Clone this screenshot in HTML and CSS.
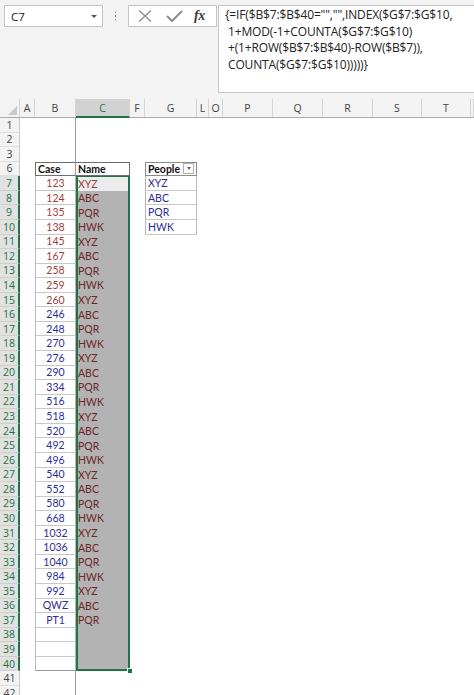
FILE: index.html
```html
<!DOCTYPE html>
<html>
<head>
<meta charset="utf-8">
<link rel="stylesheet" href="styles.css">
</head>
<body>
<div class="app">
  <div class="topbar">
    <div class="namebox"><span>C7</span><span class="nb-arrow"></span></div>
    <div class="grip"><i></i><i></i><i></i></div>
    <div class="fxbtns">
      <svg class="ico-x" width="14" height="12" viewBox="0 0 14 12"><path d="M1 0.5 L13 11.5 M13 0.5 L1 11.5" stroke="#8c8c8c" stroke-width="1.3" fill="none"/></svg>
      <svg class="ico-ok" width="17" height="12" viewBox="0 0 17 12"><path d="M1 6 L6 11 L16 1" stroke="#8c8c8c" stroke-width="2" fill="none"/></svg>
      <span class="fx">fx</span>
    </div>
    <div class="formula">
      <div class="fl">{=IF($B$7:$B$40="","",INDEX($G$7:$G$10,</div>
      <div class="fl"> 1+MOD(-1+COUNTA($G$7:$G$10)</div>
      <div class="fl"> +(1+ROW($B$7:$B$40)-ROW($B$7)),</div>
      <div class="fl"> COUNTA($G$7:$G$10)))))}</div>
    </div>
  </div>

  <div class="sheet">
    <div class="hdr">
      <div class="corner"><span class="tri"></span></div>
      <div class="w-a">A</div>
      <div class="w-b">B</div>
      <div class="w-c csel">C</div>
      <div class="w-f">F</div>
      <div class="w-g">G</div>
      <div class="w-l">L</div>
      <div class="w-o">O</div>
      <div class="w-p">P</div>
      <div class="w-p">Q</div>
      <div class="w-p">R</div>
      <div class="w-s">S</div>
      <div class="w-s">T</div>
      <div class="w-rest"></div>
    </div>

    <div class="row"><div class="rh">1</div><div class="cell w-a"></div><div class="cell w-b"></div><div class="cell w-c"></div><div class="cell w-f"></div><div class="cell w-g"></div><div class="cell w-rest"></div></div>
    <div class="row"><div class="rh">2</div><div class="cell w-a"></div><div class="cell w-b"></div><div class="cell w-c"></div><div class="cell w-f"></div><div class="cell w-g"></div><div class="cell w-rest"></div></div>
    <div class="row"><div class="rh">3</div><div class="cell w-a"></div><div class="cell w-b"></div><div class="cell w-c"></div><div class="cell w-f"></div><div class="cell w-g"></div><div class="cell w-rest"></div></div>
    <div class="row"><div class="rh">6</div><div class="cell w-a"></div><div class="cell w-b th thb">Case</div><div class="cell w-c th thc">Name</div><div class="cell w-f"></div><div class="cell w-g gth"><span>People</span><span class="dd"><span class="dd-tri"></span></span></div><div class="cell w-rest"></div></div>

    <div class="row"><div class="rh sel">7</div><div class="cell w-a"></div><div class="cell w-b tb red">123</div><div class="cell w-c sel first">XYZ</div><div class="cell w-f"></div><div class="cell w-g tg">XYZ</div><div class="cell w-rest"></div></div>
    <div class="row"><div class="rh sel">8</div><div class="cell w-a"></div><div class="cell w-b tb red">124</div><div class="cell w-c sel">ABC</div><div class="cell w-f"></div><div class="cell w-g tg">ABC</div><div class="cell w-rest"></div></div>
    <div class="row"><div class="rh sel">9</div><div class="cell w-a"></div><div class="cell w-b tb red">135</div><div class="cell w-c sel">PQR</div><div class="cell w-f"></div><div class="cell w-g tg">PQR</div><div class="cell w-rest"></div></div>
    <div class="row"><div class="rh sel">10</div><div class="cell w-a"></div><div class="cell w-b tb red">138</div><div class="cell w-c sel">HWK</div><div class="cell w-f"></div><div class="cell w-g tg">HWK</div><div class="cell w-rest"></div></div>
    <div class="row"><div class="rh sel">11</div><div class="cell w-a"></div><div class="cell w-b tb red">145</div><div class="cell w-c sel">XYZ</div><div class="cell w-f"></div><div class="cell w-g"></div><div class="cell w-rest"></div></div>
    <div class="row"><div class="rh sel">12</div><div class="cell w-a"></div><div class="cell w-b tb red">167</div><div class="cell w-c sel">ABC</div><div class="cell w-f"></div><div class="cell w-g"></div><div class="cell w-rest"></div></div>
    <div class="row"><div class="rh sel">13</div><div class="cell w-a"></div><div class="cell w-b tb red">258</div><div class="cell w-c sel">PQR</div><div class="cell w-f"></div><div class="cell w-g"></div><div class="cell w-rest"></div></div>
    <div class="row"><div class="rh sel">14</div><div class="cell w-a"></div><div class="cell w-b tb red">259</div><div class="cell w-c sel">HWK</div><div class="cell w-f"></div><div class="cell w-g"></div><div class="cell w-rest"></div></div>
    <div class="row"><div class="rh sel">15</div><div class="cell w-a"></div><div class="cell w-b tb red">260</div><div class="cell w-c sel">XYZ</div><div class="cell w-f"></div><div class="cell w-g"></div><div class="cell w-rest"></div></div>
    <div class="row"><div class="rh sel">16</div><div class="cell w-a"></div><div class="cell w-b tb blue">246</div><div class="cell w-c sel">ABC</div><div class="cell w-f"></div><div class="cell w-g"></div><div class="cell w-rest"></div></div>
    <div class="row"><div class="rh sel">17</div><div class="cell w-a"></div><div class="cell w-b tb blue">248</div><div class="cell w-c sel">PQR</div><div class="cell w-f"></div><div class="cell w-g"></div><div class="cell w-rest"></div></div>
    <div class="row"><div class="rh sel">18</div><div class="cell w-a"></div><div class="cell w-b tb blue">270</div><div class="cell w-c sel">HWK</div><div class="cell w-f"></div><div class="cell w-g"></div><div class="cell w-rest"></div></div>
    <div class="row"><div class="rh sel">19</div><div class="cell w-a"></div><div class="cell w-b tb blue">276</div><div class="cell w-c sel">XYZ</div><div class="cell w-f"></div><div class="cell w-g"></div><div class="cell w-rest"></div></div>
    <div class="row"><div class="rh sel">20</div><div class="cell w-a"></div><div class="cell w-b tb blue">290</div><div class="cell w-c sel">ABC</div><div class="cell w-f"></div><div class="cell w-g"></div><div class="cell w-rest"></div></div>
    <div class="row"><div class="rh sel">21</div><div class="cell w-a"></div><div class="cell w-b tb blue">334</div><div class="cell w-c sel">PQR</div><div class="cell w-f"></div><div class="cell w-g"></div><div class="cell w-rest"></div></div>
    <div class="row"><div class="rh sel">22</div><div class="cell w-a"></div><div class="cell w-b tb blue">516</div><div class="cell w-c sel">HWK</div><div class="cell w-f"></div><div class="cell w-g"></div><div class="cell w-rest"></div></div>
    <div class="row"><div class="rh sel">23</div><div class="cell w-a"></div><div class="cell w-b tb blue">518</div><div class="cell w-c sel">XYZ</div><div class="cell w-f"></div><div class="cell w-g"></div><div class="cell w-rest"></div></div>
    <div class="row"><div class="rh sel">24</div><div class="cell w-a"></div><div class="cell w-b tb blue">520</div><div class="cell w-c sel">ABC</div><div class="cell w-f"></div><div class="cell w-g"></div><div class="cell w-rest"></div></div>
    <div class="row"><div class="rh sel">25</div><div class="cell w-a"></div><div class="cell w-b tb blue">492</div><div class="cell w-c sel">PQR</div><div class="cell w-f"></div><div class="cell w-g"></div><div class="cell w-rest"></div></div>
    <div class="row"><div class="rh sel">26</div><div class="cell w-a"></div><div class="cell w-b tb blue">496</div><div class="cell w-c sel">HWK</div><div class="cell w-f"></div><div class="cell w-g"></div><div class="cell w-rest"></div></div>
    <div class="row"><div class="rh sel">27</div><div class="cell w-a"></div><div class="cell w-b tb blue">540</div><div class="cell w-c sel">XYZ</div><div class="cell w-f"></div><div class="cell w-g"></div><div class="cell w-rest"></div></div>
    <div class="row"><div class="rh sel">28</div><div class="cell w-a"></div><div class="cell w-b tb blue">552</div><div class="cell w-c sel">ABC</div><div class="cell w-f"></div><div class="cell w-g"></div><div class="cell w-rest"></div></div>
    <div class="row"><div class="rh sel">29</div><div class="cell w-a"></div><div class="cell w-b tb blue">580</div><div class="cell w-c sel">PQR</div><div class="cell w-f"></div><div class="cell w-g"></div><div class="cell w-rest"></div></div>
    <div class="row"><div class="rh sel">30</div><div class="cell w-a"></div><div class="cell w-b tb blue">668</div><div class="cell w-c sel">HWK</div><div class="cell w-f"></div><div class="cell w-g"></div><div class="cell w-rest"></div></div>
    <div class="row"><div class="rh sel">31</div><div class="cell w-a"></div><div class="cell w-b tb blue">1032</div><div class="cell w-c sel">XYZ</div><div class="cell w-f"></div><div class="cell w-g"></div><div class="cell w-rest"></div></div>
    <div class="row"><div class="rh sel">32</div><div class="cell w-a"></div><div class="cell w-b tb blue">1036</div><div class="cell w-c sel">ABC</div><div class="cell w-f"></div><div class="cell w-g"></div><div class="cell w-rest"></div></div>
    <div class="row"><div class="rh sel">33</div><div class="cell w-a"></div><div class="cell w-b tb blue">1040</div><div class="cell w-c sel">PQR</div><div class="cell w-f"></div><div class="cell w-g"></div><div class="cell w-rest"></div></div>
    <div class="row"><div class="rh sel">34</div><div class="cell w-a"></div><div class="cell w-b tb blue">984</div><div class="cell w-c sel">HWK</div><div class="cell w-f"></div><div class="cell w-g"></div><div class="cell w-rest"></div></div>
    <div class="row"><div class="rh sel">35</div><div class="cell w-a"></div><div class="cell w-b tb blue">992</div><div class="cell w-c sel">XYZ</div><div class="cell w-f"></div><div class="cell w-g"></div><div class="cell w-rest"></div></div>
    <div class="row"><div class="rh sel">36</div><div class="cell w-a"></div><div class="cell w-b tb blue">QWZ</div><div class="cell w-c sel">ABC</div><div class="cell w-f"></div><div class="cell w-g"></div><div class="cell w-rest"></div></div>
    <div class="row"><div class="rh sel">37</div><div class="cell w-a"></div><div class="cell w-b tb blue">PT1</div><div class="cell w-c sel">PQR</div><div class="cell w-f"></div><div class="cell w-g"></div><div class="cell w-rest"></div></div>
    <div class="row"><div class="rh sel">38</div><div class="cell w-a"></div><div class="cell w-b tb"></div><div class="cell w-c sel"></div><div class="cell w-f"></div><div class="cell w-g"></div><div class="cell w-rest"></div></div>
    <div class="row"><div class="rh sel">39</div><div class="cell w-a"></div><div class="cell w-b tb"></div><div class="cell w-c sel"></div><div class="cell w-f"></div><div class="cell w-g"></div><div class="cell w-rest"></div></div>
    <div class="row"><div class="rh sel">40</div><div class="cell w-a"></div><div class="cell w-b tb tblast"></div><div class="cell w-c sel last"><span class="handle"></span></div><div class="cell w-f"></div><div class="cell w-g"></div><div class="cell w-rest"></div></div>

    <div class="row"><div class="rh">41</div><div class="cell w-a"></div><div class="cell w-b"></div><div class="cell w-c"></div><div class="cell w-f"></div><div class="cell w-g"></div><div class="cell w-rest"></div></div>
    <div class="row"><div class="rh">42</div><div class="cell w-a"></div><div class="cell w-b"></div><div class="cell w-c"></div><div class="cell w-f"></div><div class="cell w-g"></div><div class="cell w-rest"></div></div>
  </div>
</div>
</body>
</html>
```

FILE: styles.css
```css
* { box-sizing: border-box; }

html, body {
  margin: 0;
  padding: 0;
  background: #ffffff;
}

.app {
  width: 474px;
  height: 695px;
  overflow: hidden;
  font-family: "Lato", "Liberation Sans", sans-serif;
}

/* ---------- formula bar ---------- */
.topbar {
  height: 99px;
  background: #f3f3f3;
  display: flex;
  align-items: flex-start;
  padding: 5px 0 0 4px;
}

.namebox {
  width: 99px;
  height: 22px;
  background: #fff;
  border: 1px solid #c6c6c6;
  display: flex;
  align-items: center;
  justify-content: space-between;
  padding: 0 5px 0 6px;
  font-family: "Open Sans", sans-serif;
  font-size: 11.5px;
  color: #222;
}

.nb-arrow {
  width: 0;
  height: 0;
  border-left: 3px solid transparent;
  border-right: 3px solid transparent;
  border-top: 3px solid #555;
}

.grip {
  width: 25px;
  height: 22px;
  display: flex;
  flex-direction: column;
  align-items: center;
  justify-content: center;
  gap: 2px;
}
.grip i {
  display: block;
  width: 1.5px;
  height: 1.5px;
  background: #8a8a8a;
}

.fxbtns {
  width: 89px;
  height: 22px;
  background: #fff;
  border: 1px solid #c6c6c6;
  display: flex;
  align-items: center;
  padding: 0 8px 0 9px;
}
.ico-x { margin-right: 14px; }
.ico-ok { margin-right: 11px; }
.fx {
  font-family: "Liberation Serif", serif;
  font-style: italic;
  font-weight: bold;
  font-size: 14px;
  color: #3a3a3a;
  letter-spacing: -0.5px;
}

.formula {
  flex: 1;
  height: 88px;
  margin-left: 1px;
  background: #fff;
  border: 1px solid #c6c6c6;
  border-right: none;
  padding: 1px 0 0 6px;
  font-family: "Open Sans", sans-serif;
  font-size: 12px;
  line-height: 16.7px;
  color: #222;
  letter-spacing: -0.15px;
}
.fl { white-space: pre; }

/* ---------- sheet ---------- */
.sheet {
  font-size: 10.5px;
}

.hdr {
  display: flex;
  height: 19px;
  background: #f3f3f3;
  border-bottom: 1px solid #ababab;
}
.hdr > div {
  height: 18px;
  border-right: 1px solid #d4d4d4;
  text-align: center;
  line-height: 19px;
  font-family: "Open Sans", sans-serif;
  font-size: 10.5px;
  color: #444;
}
.hdr > div.csel {
  background: #d2d2d2;
  color: #217346;
  border-bottom: 2px solid #217346;
  height: 19px;
}
.hdr > .corner {
  width: 20px;
  position: relative;
}
.tri {
  position: absolute;
  right: 2px;
  bottom: 2px;
  width: 0;
  height: 0;
  border-left: 9px solid transparent;
  border-bottom: 9px solid #c9c9c9;
}

.w-a { width: 15px; }
.w-b { width: 41px; }
.w-c { width: 54px; }
.w-f { width: 15px; }
.w-g { width: 52px; }
.w-l { width: 12px; }
.w-o { width: 14px; }
.w-p { width: 50px; }
.w-s { width: 49px; }
.w-rest { flex: 1; }

.row {
  display: flex;
  height: 14.57px;
}

.rh {
  width: 20px;
  background: #f3f3f3;
  border-right: 1px solid #c6c6c6;
  border-bottom: 1px solid #dedede;
  display: flex;
  align-items: center;
  justify-content: center;
  font-family: "Open Sans", sans-serif;
  font-size: 10.5px;
  color: #444;
}
.rh.sel {
  background: #e1e1e1;
  color: #217346;
  border-right: 2px solid #217346;
  border-bottom-color: #cfcfcf;
}

.cell {
  display: flex;
  align-items: center;
  white-space: nowrap;
  color: #111;
}

/* freeze-pane line to the right of column B */
.cell.w-b { border-right: 1px solid #9a9a9a; }

/* Case / Name header */
.th {
  font-weight: bold;
  padding-left: 2px;
  border-top: 1px solid #6f6f6f;
  border-bottom: 1px solid #6f6f6f;
}
.thb { border-left: 1px solid #6f6f6f; border-right: 1px solid #6f6f6f; }
.thc { border-right: 1px solid #6f6f6f; }

/* Case column body */
.tb {
  justify-content: center;
  border-left: 1px solid #b8b8b8;
  border-bottom: 1px solid #c8c8c8;
}
.cell.tb { border-right-color: #b8b8b8; }
.tblast { border-bottom-color: #9a9a9a; }
.red { color: #a0403c; }
.blue { color: #2d2d96; }

/* selected Name column */
.cell.sel {
  background: #b3b3b3;
  color: #6e2626;
  padding-left: 2px;
  box-shadow: inset 2px 0 #217346, inset -2px 0 #217346;
}
.cell.sel.first {
  background: #ececec;
  color: #a0403c;
  box-shadow: inset 2px 0 #217346, inset -2px 0 #217346, inset 0 1px #217346;
}
.cell.sel.last {
  position: relative;
  box-shadow: inset 2px 0 #217346, inset -2px 0 #217346, inset 0 -2px #217346;
}
.handle {
  position: absolute;
  right: -3px;
  bottom: -3px;
  width: 6px;
  height: 6px;
  background: #217346;
  border: 1px solid #fff;
}

/* People table */
.gth {
  font-weight: bold;
  justify-content: space-between;
  padding: 0 2px 0 2px;
  border: 1px solid #8a8a8a;
}
.dd {
  width: 11px;
  height: 11px;
  border: 1px solid #b0b0b0;
  background: #fbfbfb;
  display: flex;
  align-items: center;
  justify-content: center;
}
.dd-tri {
  width: 0;
  height: 0;
  border-left: 2.5px solid transparent;
  border-right: 2.5px solid transparent;
  border-top: 3px solid #666;
}
.tg {
  color: #2d2d96;
  padding-left: 2px;
  border-left: 1px solid #b8b8b8;
  border-right: 1px solid #b8b8b8;
  border-bottom: 1px solid #c8c8c8;
}
```
